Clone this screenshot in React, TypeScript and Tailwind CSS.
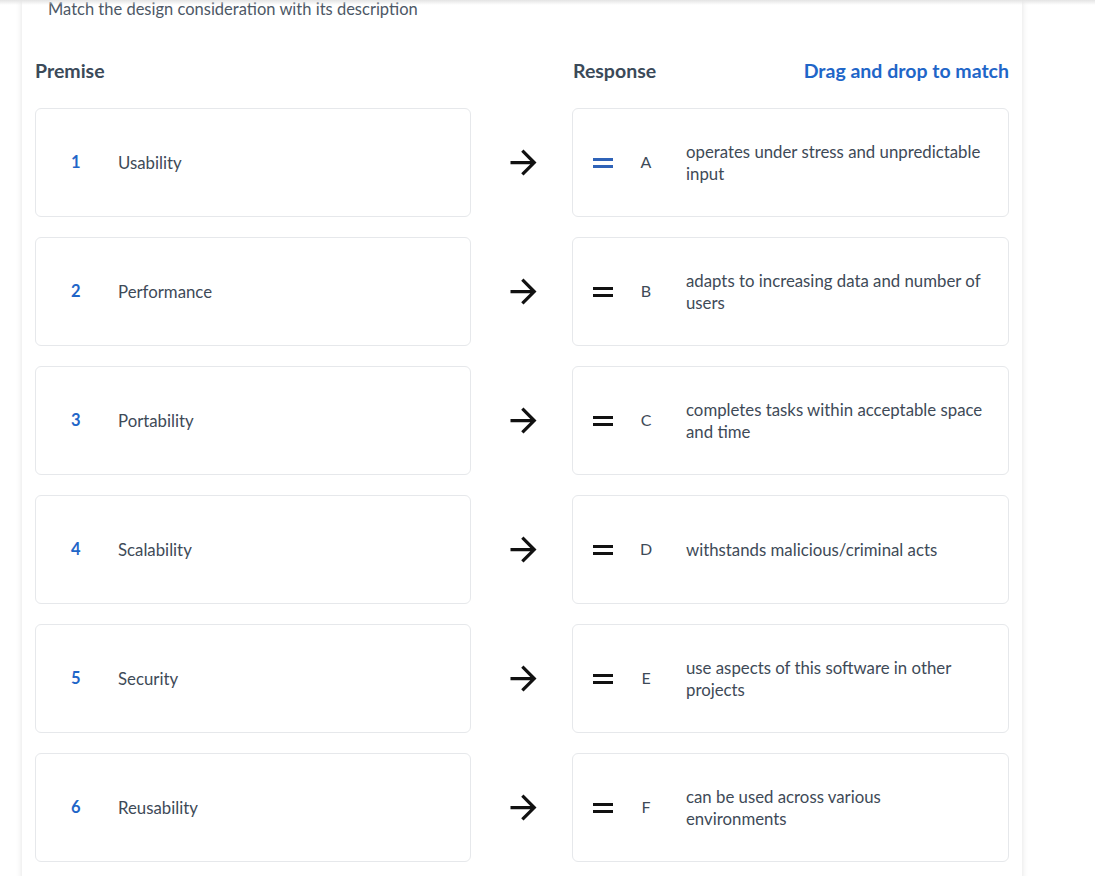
import React from 'react';

const PREMISES = ['Usability', 'Performance', 'Portability', 'Scalability', 'Security', 'Reusability'];

const RESPONSES = [
  { letter: 'A', lines: ['operates under stress and unpredictable', 'input'] },
  { letter: 'B', lines: ['adapts to increasing data and number of', 'users'] },
  { letter: 'C', lines: ['completes tasks within acceptable space', 'and time'] },
  { letter: 'D', lines: ['withstands malicious/criminal acts'] },
  { letter: 'E', lines: ['use aspects of this software in other', 'projects'] },
  { letter: 'F', lines: ['can be used across various', 'environments'] },
];

const ArrowIcon = () => (
  <svg width="39" height="39" viewBox="0 0 24 24" fill="#111">
    <path d="M12 4l-1.41 1.41L16.17 11H4v2h12.17l-5.58 5.59L12 20l8-8z" />
  </svg>
);

const DragHandle = ({ active }: { active: boolean }) => (
  <svg width="20" height="10" viewBox="0 0 20 10" fill={active ? '#2f63b8' : '#111'}>
    <rect x="0" y="0" width="20" height="3" />
    <rect x="0" y="7" width="20" height="3" />
  </svg>
);

export default function App() {
  return (
    <div
      className="relative min-h-screen bg-white overflow-hidden"
      style={{ fontFamily: 'Lato, "Noto Sans", sans-serif' }}
    >
      <div className="absolute left-0 right-0 top-0 h-[5px] bg-gradient-to-b from-[#e4e4e4] to-transparent z-10" />

      <div className="ml-[22px] w-[1000px] bg-white shadow-[0_0_6px_rgba(0,0,0,0.12)] px-[13px] pb-[20px]">
        <p className="pl-[13px] text-[16.5px] leading-[22px] text-[#4d5866] -mt-[2px]">
          Match the design consideration with its description
        </p>

        <div className="grid grid-cols-[436px_101px_437px] mt-[39px] items-center leading-[24px]">
          <div className="text-[19.5px] font-bold text-[#3b4a59]">Premise</div>
          <div />
          <div className="flex items-center justify-between">
            <span className="text-[19.5px] font-bold text-[#3b4a59] pl-px">Response</span>
            <span className="text-[19.5px] font-bold text-[#1f66c8]">Drag and drop to match</span>
          </div>
        </div>

        <div className="mt-[25px] flex flex-col gap-[20px]">
          {PREMISES.map((p, i) => (
            <div key={p} className="grid grid-cols-[436px_101px_437px] h-[109px]">
              <div className="flex items-center rounded-[6px] border border-[#e6e8eb] bg-white pl-[35px]">
                <span className="w-[47px] text-[16.5px] font-bold text-[#1f66c8]">{i + 1}</span>
                <span className="text-[16.8px] text-[#3e4a57]">{p}</span>
              </div>
              <div className="flex items-center justify-center pl-[4px]">
                <ArrowIcon />
              </div>
              <div className="flex items-center rounded-[6px] border border-[#e6e8eb] bg-white pl-[20px] pr-[20px]">
                <DragHandle active={i === 0} />
                <span className="w-[53px] text-center text-[16px] text-[#3e4a57] pl-[13px] mt-[-2px]">
                  {RESPONSES[i].letter}
                </span>
                <span className="ml-[20px] text-[16.8px] leading-[22px] text-[#3e4a57]">
                  {RESPONSES[i].lines.map((l, j) => (
                    <span key={j} className="block">
                      {l}
                    </span>
                  ))}
                </span>
              </div>
            </div>
          ))}
        </div>
      </div>
    </div>
  );
}
